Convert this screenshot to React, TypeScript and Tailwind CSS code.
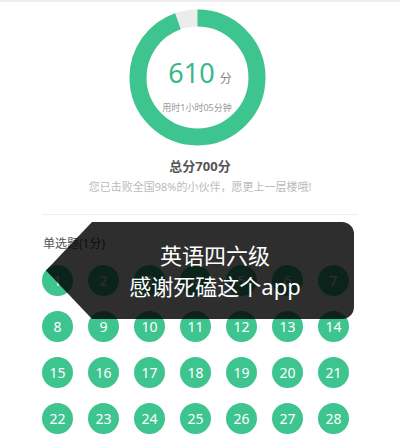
const GREEN = '#3ec48f';

function ScoreRing() {
  // arc runs clockwise from 12 o'clock, leaving a small grey gap before the top
  const r = 59.5;
  const c = 2 * Math.PI * r;
  const pct = 0.945;
  return (
    <div className="relative ml-[-6px] h-[137px] w-[137px]">
      <svg width="137" height="137" viewBox="0 0 137 137">
        <circle cx="68.5" cy="68.5" r={r} fill="none" stroke="#ececec" strokeWidth="17" />
        <circle
          cx="68.5"
          cy="68.5"
          r={r}
          fill="none"
          stroke={GREEN}
          strokeWidth="17"
          strokeDasharray={`${c * pct} ${c}`}
          transform="rotate(-90 68.5 68.5)"
        />
      </svg>
      <div className="absolute inset-0 flex flex-col items-center">
        <div className="mt-[48px] flex items-baseline pl-[6px]">
          <span className="text-[27px] leading-[32px] text-[#3bb88a]">610</span>
          <span className="ml-[5px] text-[12px] text-[#888]">分</span>
        </div>
        <div className="mt-[13px] text-[9px] leading-[12px] text-[#999]">用时1小时05分钟</div>
      </div>
    </div>
  );
}

export default function App() {
  const nums = Array.from({ length: 28 }, (_, i) => i + 1);

  return (
    <div
      className="relative h-[436px] w-[400px] overflow-hidden bg-white"
      style={{ fontFamily: '"Noto Sans", "Noto Sans CJK SC", sans-serif' }}
    >
      <div className="h-[2px] w-full bg-[#eeeeee]" />
      <div className="mt-[7px] flex flex-col items-center">
        <ScoreRing />
        <div className="mt-[10px] text-[13px] font-bold leading-[20px] text-[#555]">总分700分</div>
        <div className="mt-[3px] text-[11px] leading-[16px] text-[#bbb]">
          您已击败全国98%的小伙伴，愿更上一层楼哦!
        </div>
      </div>
      <div className="mx-[42px] mt-[19px] h-px bg-[#eeeeee]" />
      <div className="ml-[43px] mt-[20px] text-[12px] leading-[18px] text-[#555]">单选题(1分)</div>
      <div className="ml-[42px] mt-[12px] grid w-[307px] grid-cols-7 gap-x-[15px] gap-y-[15px]">
        {nums.map((n) => (
          <div
            key={n}
            className="flex h-[31px] w-[31px] items-center justify-center rounded-full bg-[#3ec48f] text-[14px] text-white"
          >
            {n}
          </div>
        ))}
      </div>

      {/* toast overlay */}
      <div className="absolute left-[46px] top-[222px] flex h-[97px] w-[308px] flex-col items-center justify-center rounded-r-[12px] bg-black/[0.82] pl-[30px] [clip-path:polygon(46px_0,100%_0,100%_100%,46px_100%,0_50%)]">
        <div className="text-[22px] leading-[31px] text-white">英语四六级</div>
        <div className="text-[22px] leading-[31px] text-white">感谢死磕这个app</div>
      </div>
    </div>
  );
}
